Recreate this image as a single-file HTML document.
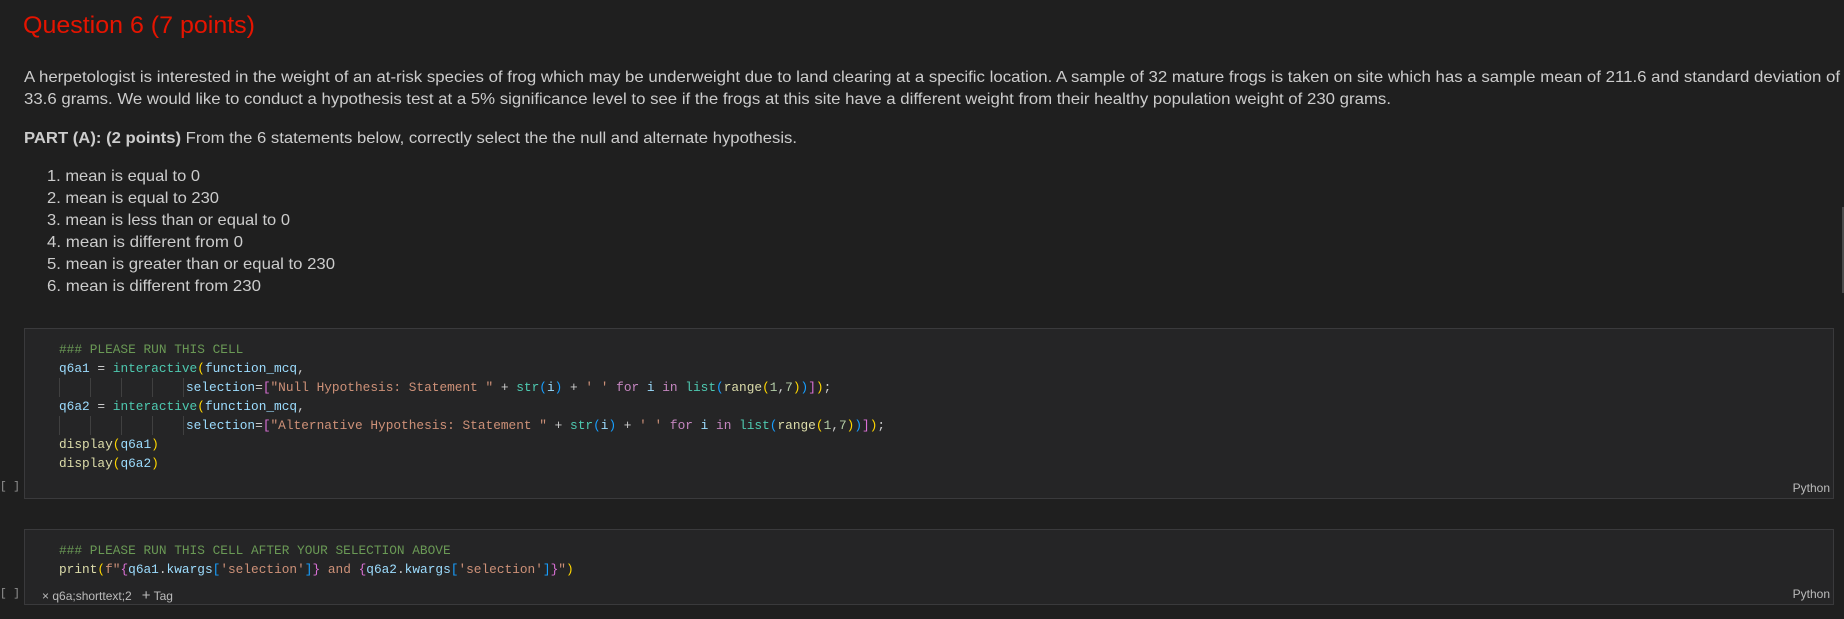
<!DOCTYPE html>
<html><head><meta charset="utf-8"><style>
html,body{margin:0;padding:0;background:#1f1f1f;width:1844px;height:619px;overflow:hidden;font-family:"Liberation Sans",sans-serif;}
svg{position:absolute;left:0;top:0}
.cell{position:absolute;left:24px;width:1810px;background:#252526;border:1px solid #3a3a3c;box-sizing:border-box}
.code{position:absolute;left:59px;font-family:"Liberation Mono",monospace;font-size:12.8px;line-height:19px;color:#cccccc;white-space:pre;margin:0}
.py{position:absolute;right:14px;font-size:12px;color:#bbbbbb}
.br{position:absolute;left:0;font-family:"Liberation Mono",monospace;font-size:11px;color:#999}
.c{color:#6a9955}.v{color:#9cdcfe}.t{color:#4ec9b0}.f{color:#dcdcaa}.s{color:#ce9178}.k{color:#c586c0}.n{color:#b5cea8}
.y{color:#ffd700}.p{color:#da70d6}.b{color:#179fff}
.g{display:inline-block;border-left:1px solid #404040;height:19px;vertical-align:top}
</style></head><body>
<svg width="1844" height="619" font-family="Liberation Sans, sans-serif">
<text x="23" y="33" font-size="24" fill="#e51400" textLength="232" lengthAdjust="spacingAndGlyphs">Question 6 (7 points)</text>
<g fill="#cccccc" font-size="16">
<text x="24" y="82" textLength="1816" lengthAdjust="spacingAndGlyphs">A herpetologist is interested in the weight of an at-risk species of frog which may be underweight due to land clearing at a specific location. A sample of 32 mature frogs is taken on site which has a sample mean of 211.6 and standard deviation of</text>
<text x="24" y="104" textLength="1367" lengthAdjust="spacingAndGlyphs">33.6 grams. We would like to conduct a hypothesis test at a 5% significance level to see if the frogs at this site have a different weight from their healthy population weight of 230 grams.</text>
<text x="24" y="143" textLength="773" lengthAdjust="spacingAndGlyphs"><tspan font-weight="bold">PART (A): (2 points)</tspan> From the 6 statements below, correctly select the the null and alternate hypothesis.</text>
<text x="47" y="181" textLength="153" lengthAdjust="spacingAndGlyphs">1. mean is equal to 0</text>
<text x="47" y="203" textLength="172" lengthAdjust="spacingAndGlyphs">2. mean is equal to 230</text>
<text x="47" y="225" textLength="243" lengthAdjust="spacingAndGlyphs">3. mean is less than or equal to 0</text>
<text x="47" y="247" textLength="196" lengthAdjust="spacingAndGlyphs">4. mean is different from 0</text>
<text x="47" y="269" textLength="288" lengthAdjust="spacingAndGlyphs">5. mean is greater than or equal to 230</text>
<text x="47" y="291" textLength="214" lengthAdjust="spacingAndGlyphs">6. mean is different from 230</text>
</g>
<rect x="1842" y="207" width="2" height="86" fill="#4a4a4a"/>
</svg>

<div class="cell" style="top:328px;height:171px"></div>
<pre class="code" style="top:340px"><span class="c">### PLEASE RUN THIS CELL</span>
<span class="v">q6a1</span> = <span class="t">interactive</span><span class="y">(</span><span class="v">function_mcq</span>,
<span class="g" style="width:30px"></span><span class="g" style="width:30px"></span><span class="g" style="width:30px"></span><span class="g" style="width:30px"></span><span class="g" style="width:2px"></span><span class="v">selection</span>=<span class="p">[</span><span class="s">"Null Hypothesis: Statement "</span> + <span class="t">str</span><span class="b">(</span><span class="v">i</span><span class="b">)</span> + <span class="s">' '</span> <span class="k">for</span> <span class="v">i</span> <span class="k">in</span> <span class="t">list</span><span class="b">(</span><span class="f">range</span><span class="y">(</span><span class="n">1</span>,<span class="n">7</span><span class="y">)</span><span class="b">)</span><span class="p">]</span><span class="y">)</span>;
<span class="v">q6a2</span> = <span class="t">interactive</span><span class="y">(</span><span class="v">function_mcq</span>,
<span class="g" style="width:30px"></span><span class="g" style="width:30px"></span><span class="g" style="width:30px"></span><span class="g" style="width:30px"></span><span class="g" style="width:2px"></span><span class="v">selection</span>=<span class="p">[</span><span class="s">"Alternative Hypothesis: Statement "</span> + <span class="t">str</span><span class="b">(</span><span class="v">i</span><span class="b">)</span> + <span class="s">' '</span> <span class="k">for</span> <span class="v">i</span> <span class="k">in</span> <span class="t">list</span><span class="b">(</span><span class="f">range</span><span class="y">(</span><span class="n">1</span>,<span class="n">7</span><span class="y">)</span><span class="b">)</span><span class="p">]</span><span class="y">)</span>;
<span class="f">display</span><span class="y">(</span><span class="v">q6a1</span><span class="y">)</span>
<span class="f">display</span><span class="y">(</span><span class="v">q6a2</span><span class="y">)</span></pre>
<div class="py" style="top:481px">Python</div>
<div class="br" style="top:481px">[ ]</div>

<div class="cell" style="top:529px;height:76px"></div>
<pre class="code" style="top:541px"><span class="c">### PLEASE RUN THIS CELL AFTER YOUR SELECTION ABOVE</span>
<span class="f">print</span><span class="y">(</span><span class="s">f"</span><span class="p">{</span><span class="v">q6a1</span>.<span class="v">kwargs</span><span class="b">[</span><span class="s">'selection'</span><span class="b">]</span><span class="p">}</span><span class="s"> and </span><span class="p">{</span><span class="v">q6a2</span>.<span class="v">kwargs</span><span class="b">[</span><span class="s">'selection'</span><span class="b">]</span><span class="p">}</span><span class="s">"</span><span class="y">)</span></pre>
<div style="position:absolute;left:42px;top:587px;font-size:12px;color:#bbbbbb;white-space:nowrap">× q6a;shorttext;2&nbsp;&nbsp;&nbsp;<span style="font-size:15px">+</span> Tag</div>
<div class="py" style="top:587px">Python</div>
<div class="br" style="top:588px">[ ]</div>
</body></html>
